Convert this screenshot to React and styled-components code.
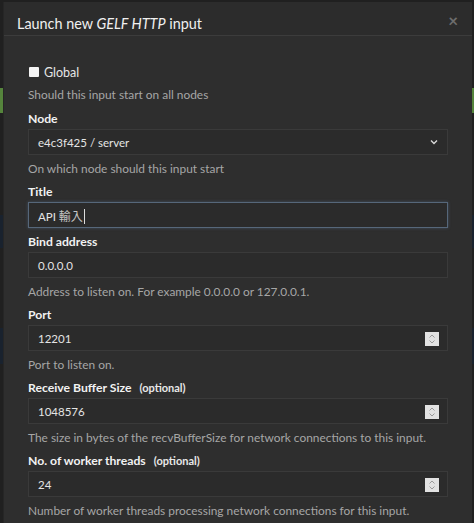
import { styled, createGlobalStyle } from "styled-components";

const Global = createGlobalStyle`
  html, body { margin: 0; padding: 0; background: #1f1f1f; }
  body { font-family: "Lato", "Noto Sans CJK TC", sans-serif; }
`;

const Page = styled.div`
  position: relative;
  width: 474px;
  height: 523px;
  overflow: hidden;
  background: #202020;
  display: flex;
  flex-direction: column;
`;

const BgBar = styled.div`
  height: ${(p) => p.$h}px;
  margin-top: ${(p) => p.$top}px;
  background: ${(p) => p.$color};
`;

const Modal = styled.div`
  position: absolute;
  top: 2px;
  left: 3px;
  right: 2px;
  bottom: 0;
  background: #2e2e2e;
  border-left: 1px solid #262626;
  display: flex;
  flex-direction: column;
`;

const Header = styled.div`
  height: 42px;
  box-sizing: border-box;
  padding: 10px 14px 0 13px;
  display: flex;
  align-items: center;
  justify-content: space-between;
  border-bottom: 1px solid #3c3c3c;
  background: #2c2c2c;
`;

const HeaderTitle = styled.h4`
  margin: 0;
  font-size: 14.4px;
  font-weight: 400;
  color: #f0f0f0;
  em { font-style: italic; }
`;

const Close = styled.span`
  margin-top: -7px;
  color: #6e6e6e;
  font-size: 17px;
  font-weight: 700;
  line-height: 1;
`;

const Body = styled.div`
  padding: 27px 24px 0 24px;
  display: flex;
  flex-direction: column;
`;

const Group = styled.div`
  display: flex;
  flex-direction: column;
  margin-bottom: ${(p) => p.$gap ?? 3}px;
`;

const CheckRow = styled.label`
  display: flex;
  align-items: center;
  gap: 5px;
  height: 18px;
  font-size: 12.5px;
  color: #e6e6e6;
`;

const Box = styled.span`
  width: 10px;
  height: 10px;
  margin-left: 1px;
  background: #f4f4f4;
  border-radius: 1px;
`;

const Label = styled.label`
  display: flex;
  align-items: baseline;
  gap: 8px;
  height: 18px;
  line-height: 18px;
  padding-top: 2px;
  margin-bottom: 1px;
  font-size: 12.2px;
  font-weight: 700;
  color: #f2f2f2;
`;

const Optional = styled.span`
  font-size: 11px;
  font-weight: 700;
  color: #e8e8e8;
`;

const Field = styled.div`
  position: relative;
  height: 26px;
  box-sizing: border-box;
  border: 1px solid ${(p) => (p.$focus ? "#56677a" : "#3a3a3a")};
  box-shadow: ${(p) => (p.$focus ? "0 0 3px rgba(110, 150, 190, 0.35)" : "none")};
  background: #2b2b2b;
  display: flex;
  align-items: center;
  padding: 0 9px;
  font-size: 11.5px;
  color: #e4e4e4;
`;

const Value = styled.span`
  flex: 1;
  white-space: nowrap;
`;

const Caret = styled.span`
  display: inline-block;
  width: 1px;
  height: 15px;
  margin-left: 1px;
  vertical-align: -3px;
  background: #dcdcdc;
`;

const Cjk = styled.span`
  font-family: "Noto Sans CJK TC", sans-serif;
  font-size: 12px;
  color: #c4c4c4;
`;

const Spinner = styled.span`
  position: absolute;
  right: 8px;
  top: 6px;
  width: 14px;
  height: 14px;
  background: #e2e2e2;
  display: flex;
  align-items: center;
  justify-content: center;
`;

const Help = styled.span`
  margin-top: 5px;
  height: 18px;
  line-height: 18px;
  font-size: 11.9px;
  color: #a6a6a6;
`;

const Chevron = () => (
  <svg width="8" height="6" viewBox="0 0 8 6">
    <path d="M1 1.5 L4 4.5 L7 1.5" fill="none" stroke="#d8d8d8" strokeWidth="1.4" />
  </svg>
);

const Arrows = () => (
  <svg width="8" height="12" viewBox="0 0 8 12">
    <path d="M1.5 4.5 L4 2 L6.5 4.5 M1.5 7.5 L4 10 L6.5 7.5" fill="none" stroke="#9a9a9a" strokeWidth="1" />
  </svg>
);

const fields = [
  { label: "Bind address", value: "0.0.0.0", help: "Address to listen on. For example 0.0.0.0 or 127.0.0.1." },
  { label: "Port", value: "12201", help: "Port to listen on.", number: true },
  {
    label: "Receive Buffer Size",
    optional: true,
    value: "1048576",
    help: "The size in bytes of the recvBufferSize for network connections to this input.",
    number: true,
  },
  {
    label: "No. of worker threads",
    optional: true,
    value: "24",
    help: "Number of worker threads processing network connections for this input.",
    number: true,
  },
];

export default function App() {
  return (
    <Page>
      <Global />
      <BgBar $top={88} $h={25} $color="#55843c" />
      <BgBar $top={102} $h={33} $color="#19222e" />
      <BgBar $top={80} $h={36} $color="#19222e" />

      <Modal>
        <Header>
          <HeaderTitle>
            Launch new <em>GELF HTTP</em> input
          </HeaderTitle>
          <Close>×</Close>
        </Header>

        <Body>
          <Group $gap={4}>
            <CheckRow>
              <Box />
              Global
            </CheckRow>
            <Help>Should this input start on all nodes</Help>
          </Group>

          <Group>
            <Label>Node</Label>
            <Field>
              <Value>e4c3f425 / server</Value>
              <Chevron />
            </Field>
            <Help>On which node should this input start</Help>
          </Group>

          <Group $gap={3}>
            <Label>Title</Label>
            <Field $focus>
              <Value>
                API <Cjk>輸入</Cjk>
                <Caret />
              </Value>
            </Field>
          </Group>

          {fields.map((f) => (
            <Group key={f.label}>
              <Label>
                {f.label}
                {f.optional && <Optional>(optional)</Optional>}
              </Label>
              <Field>
                <Value>{f.value}</Value>
                {f.number && (
                  <Spinner>
                    <Arrows />
                  </Spinner>
                )}
              </Field>
              <Help>{f.help}</Help>
            </Group>
          ))}
        </Body>
      </Modal>
    </Page>
  );
}
